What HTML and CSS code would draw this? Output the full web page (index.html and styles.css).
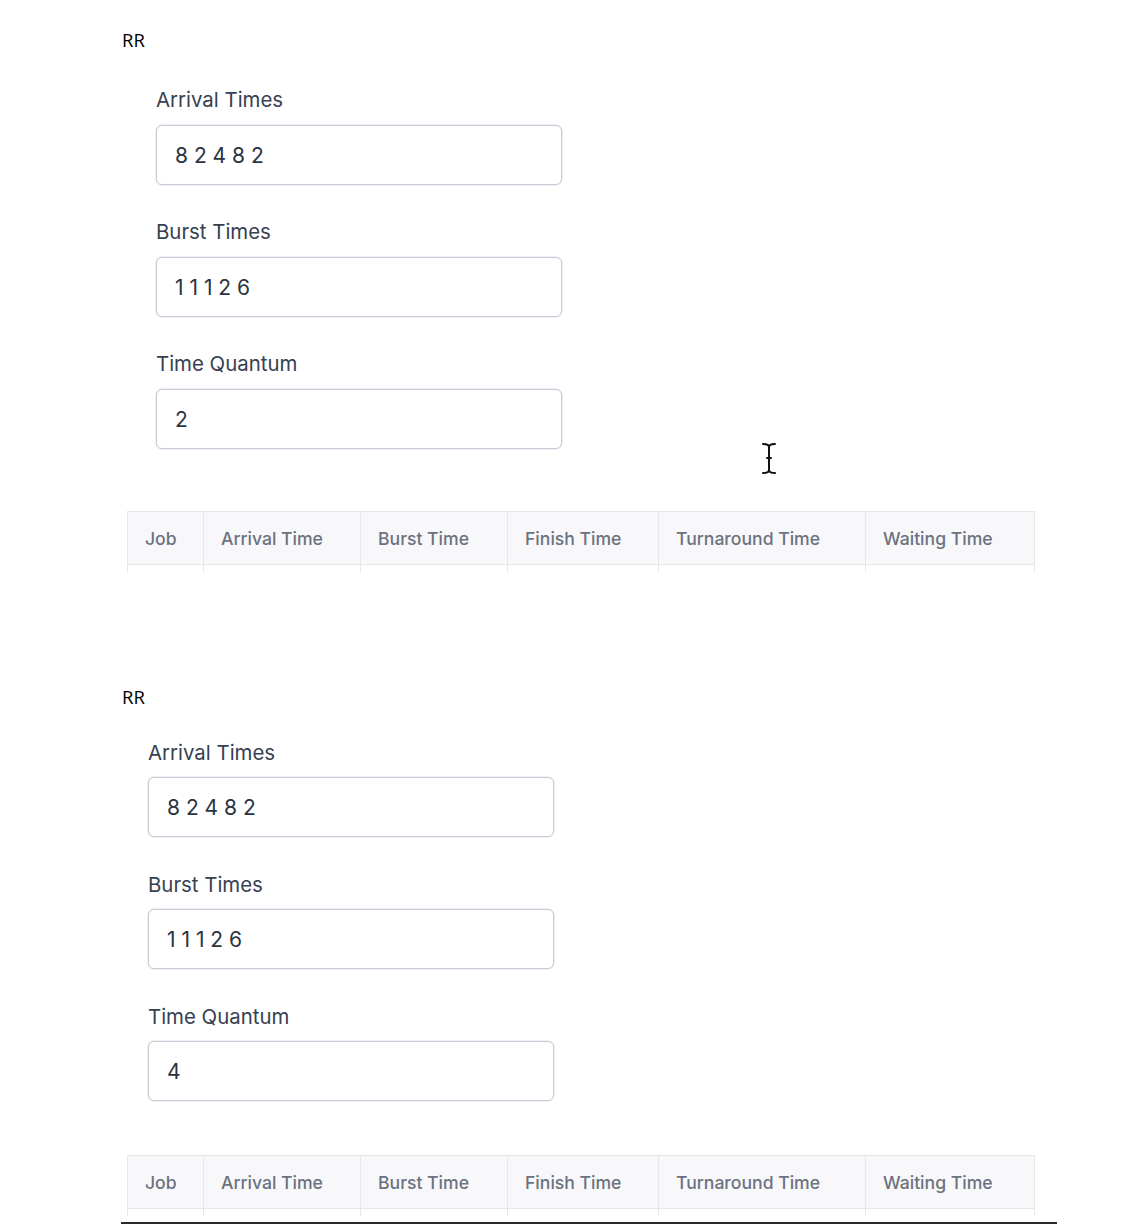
FILE: index.html
```html
<!DOCTYPE html>
<html lang="en">
<head>
<meta charset="utf-8">
<title>RR</title>
<link rel="stylesheet" href="styles.css">
</head>
<body>
<div class="page">
  <section class="block">
    <div class="block-title">RR</div>
    <div class="form">
      <div class="field">
        <label class="label">Arrival Times</label>
        <input class="input" type="text" value="8 2 4 8 2" readonly>
      </div>
      <div class="field">
        <label class="label">Burst Times</label>
        <input class="input" type="text" value="1 1 1 2 6" readonly>
      </div>
      <div class="field">
        <label class="label">Time Quantum</label>
        <input class="input" type="text" value="2" readonly>
      </div>
    </div>
    <table class="results">
      <colgroup>
        <col class="c-job"><col class="c-arr"><col class="c-burst"><col class="c-fin"><col class="c-tat"><col class="c-wait">
      </colgroup>
      <thead>
        <tr>
          <th>Job</th>
          <th>Arrival Time</th>
          <th>Burst Time</th>
          <th>Finish Time</th>
          <th>Turnaround Time</th>
          <th>Waiting Time</th>
        </tr>
      </thead>
      <tbody>
        <tr><td></td><td></td><td></td><td></td><td></td><td></td></tr>
      </tbody>
    </table>
  </section>

  <section class="block block--second">
    <div class="block-title">RR</div>
    <div class="form form--second">
      <div class="field">
        <label class="label">Arrival Times</label>
        <input class="input" type="text" value="8 2 4 8 2" readonly>
      </div>
      <div class="field">
        <label class="label">Burst Times</label>
        <input class="input" type="text" value="1 1 1 2 6" readonly>
      </div>
      <div class="field">
        <label class="label">Time Quantum</label>
        <input class="input" type="text" value="4" readonly>
      </div>
    </div>
    <table class="results results--second">
      <colgroup>
        <col class="c-job"><col class="c-arr"><col class="c-burst"><col class="c-fin"><col class="c-tat"><col class="c-wait">
      </colgroup>
      <thead>
        <tr>
          <th>Job</th>
          <th>Arrival Time</th>
          <th>Burst Time</th>
          <th>Finish Time</th>
          <th>Turnaround Time</th>
          <th>Waiting Time</th>
        </tr>
      </thead>
      <tbody>
        <tr><td></td><td></td><td></td><td></td><td></td><td></td></tr>
      </tbody>
    </table>
    <div class="rule"></div>
  </section>

  <svg class="cursor" width="16" height="33" viewBox="0 0 16 33" aria-hidden="true">
    <path d="M2 2 C5 2 8 3 8 5 C8 3 11 2 14 2 M8 5 V28 M6 16 H10 M2 31 C5 31 8 30 8 28 C8 30 11 31 14 31" fill="none" stroke="#fff" stroke-width="4" stroke-linecap="round"/>
    <path d="M2 2 C5 2 8 3 8 5 C8 3 11 2 14 2 M8 5 V28 M6 16 H10 M2 31 C5 31 8 30 8 28 C8 30 11 31 14 31" fill="none" stroke="#111" stroke-width="2" stroke-linecap="round"/>
  </svg>
</div>
</body>
</html>
```

FILE: styles.css
```css
html, body {
  margin: 0;
  padding: 0;
  background: #ffffff;
}

.page {
  position: relative;
  padding: 28px 0 0 122px;
}

.block-title {
  font-family: "Open Sans", "Liberation Sans", sans-serif;
  font-size: 18.5px;
  font-weight: 500;
  line-height: 24px;
  color: #000;
}

.form {
  display: flex;
  flex-direction: column;
  gap: 33px;
  width: 406px;
  margin: 34px 0 0 34px;
}

.field {
  display: flex;
  flex-direction: column;
  gap: 11px;
}

.form--second {
  gap: 34px;
  margin: 30px 0 0 26px;
}

.form--second .field {
  gap: 10px;
}

.label {
  font-family: Inter, "Noto Sans", sans-serif;
  font-size: 20.4px;
  line-height: 28px;
  color: #374151;
}

.input {
  box-sizing: border-box;
  width: 406px;
  height: 60px;
  margin: 0;
  padding: 0 0 0 18px;
  border: 1px solid #c9ccd6;
  border-radius: 6px;
  background: #fff;
  font-family: Inter, "Noto Sans", sans-serif;
  font-size: 21px;
  color: #2b3340;
  outline: none;
  box-shadow: 0 0 0 0.5px #dfe1e7;
}

.results {
  border-collapse: collapse;
  table-layout: fixed;
  width: 907px;
  margin: 62px 0 0 5px;
  font-family: Inter, "Noto Sans", sans-serif;
}

.results--second {
  margin-top: 54px;
}

.results th {
  height: 52px;
  padding: 0 0 0 17px;
  border: 1px solid #e6e7ea;
  background: #f8f8fa;
  text-align: left;
  font-size: 17.6px;
  font-weight: 500;
  color: #6b7280;
  white-space: nowrap;
  overflow: hidden;
}

.results td {
  height: 7px;
  padding: 0;
  border-left: 1px solid #e6e7ea;
  border-right: 1px solid #e6e7ea;
  border-top: 1px solid #e6e7ea;
  border-bottom: none;
}

.c-job { width: 76px; }
.c-arr { width: 157px; }
.c-burst { width: 147px; }
.c-fin { width: 151px; }
.c-tat { width: 207px; }
.c-wait { width: 169px; }

.block--second {
  margin-top: 113px;
}

.rule {
  width: 936px;
  height: 2px;
  margin: 6px 0 0 -1px;
  background: #2a2a2a;
}

.cursor {
  position: absolute;
  left: 761px;
  top: 442px;
}
```
